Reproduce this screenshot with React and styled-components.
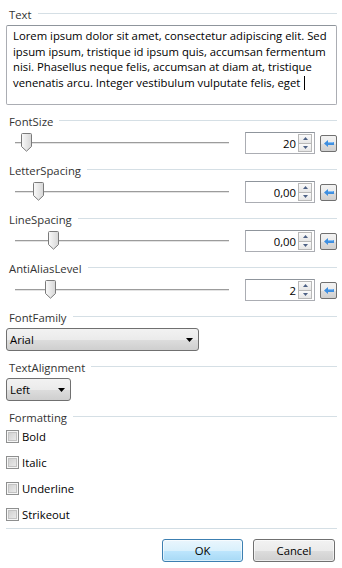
import styled, { createGlobalStyle } from "styled-components";

const GlobalStyle = createGlobalStyle`
  html, body {
    margin: 0;
    padding: 0;
    background: #ffffff;
  }
  body {
    font-family: "Open Sans", "Noto Sans", sans-serif;
    font-size: 11.3px;
    color: #1e1e1e;
  }
`;

const Window = styled.div`
  width: 342px;
  height: 568px;
  box-sizing: border-box;
  padding: 4px 5px 0 6px;
  display: flex;
  flex-direction: column;
`;

const Group = styled.section`
  display: flex;
  flex-direction: column;
  margin-bottom: 6px;
`;

const Header = styled.div`
  height: 20px;
  display: flex;
  align-items: center;
  gap: 6px;
  padding-left: 3px;
  margin-bottom: 1px;
  color: #333333;
  white-space: nowrap;
`;

const Rule = styled.div`
  flex: 1;
  height: 1px;
  background: #d5dfe5;
  border-bottom: 1px solid #ffffff;
`;

const TextBox = styled.div`
  height: 80px;
  box-sizing: border-box;
  border: 1px solid #abadb3;
  border-top-color: #8f959c;
  border-radius: 2px;
  padding: 2px 6px;
  line-height: 15.5px;
  color: #000000;
  white-space: pre;
  overflow: hidden;
`;

const Caret = styled.span`
  display: inline-block;
  width: 1px;
  height: 14px;
  background: #000;
  vertical-align: -3px;
  margin-left: 1px;
`;

const SliderRow = styled.div`
  height: 22px;
  display: flex;
  align-items: center;
  gap: 5px;
`;

const Slider = styled.div`
  flex: 1;
  height: 22px;
  position: relative;
`;

const Track = styled.div`
  position: absolute;
  left: 9px;
  right: 11px;
  top: 10px;
  height: 1px;
  background: #9c9c9c;
  border-bottom: 1px solid #e3e3e3;
`;

const Thumb = styled.svg`
  position: absolute;
  top: 1px;
  width: 11px;
  height: 19px;
`;

const NumberBox = styled.div`
  width: 70px;
  height: 22px;
  box-sizing: border-box;
  border: 1px solid #abadb3;
  border-top-color: #8f959c;
  display: flex;
  align-items: center;
  justify-content: flex-end;
  padding-right: 2px;
  gap: 2px;
  color: #000000;
`;

const Spin = styled.div`
  width: 14px;
  height: 18px;
  display: flex;
  flex-direction: column;
`;

const SpinButton = styled.div`
  flex: 1;
  box-sizing: border-box;
  border: 1px solid #b8b8b8;
  border-top-width: ${(p) => (p.$down ? "0" : "1px")};
  background: linear-gradient(#fbfbfb, #e6e6e6);
  display: flex;
  align-items: center;
  justify-content: center;
`;

const ResetButton = styled.div`
  width: 17px;
  height: 17px;
  box-sizing: border-box;
  border: 1px solid #707070;
  border-radius: 2px;
  background: linear-gradient(#f2f2f2 0%, #ebebeb 50%, #dddddd 51%, #cfcfcf 100%);
  display: flex;
  align-items: center;
  justify-content: center;
`;

const Combo = styled.div`
  width: ${(p) => p.$width}px;
  height: 23px;
  box-sizing: border-box;
  border: 1px solid #707070;
  border-radius: 3px;
  background: linear-gradient(#f2f2f2 0%, #ebebeb 50%, #dddddd 51%, #cfcfcf 100%);
  display: flex;
  align-items: center;
  justify-content: space-between;
  padding: 0 5px 0 3px;
  color: #000000;
`;

const CheckRow = styled.label`
  height: 16px;
  display: flex;
  align-items: center;
  gap: 3px;
  color: #000000;
  & + & {
    margin-top: 10px;
  }
`;

const CheckBox = styled.span`
  width: 13px;
  height: 13px;
  box-sizing: border-box;
  border: 1px solid #8e8f8f;
  box-shadow: inset 0 0 0 1px #f6f6f6, inset 0 0 0 2px #c3c3c3;
  background-image: linear-gradient(135deg, #cbcbcb, #f0f0f0);
`;

const Separator = styled.div`
  height: 1px;
  background: #d5dfe5;
`;

const ButtonBar = styled.div`
  margin-top: 10px;
  display: flex;
  justify-content: flex-end;
  gap: 10px;
  padding-right: 2px;
`;

const Button = styled.button`
  width: ${(p) => p.$width}px;
  height: 23px;
  box-sizing: border-box;
  border: 1px solid ${(p) => (p.$default ? "#3c7fb1" : "#707070")};
  border-radius: 3px;
  background: ${(p) =>
    p.$default
      ? "linear-gradient(#eaf6fd 0%, #d9f0fc 50%, #bee6fd 51%, #a7d9f5 100%)"
      : "linear-gradient(#f2f2f2 0%, #ebebeb 50%, #dddddd 51%, #cfcfcf 100%)"};
  box-shadow: inset 0 0 0 1px rgba(255, 255, 255, 0.6);
  font-family: inherit;
  font-size: inherit;
  color: #000000;
  padding: 0;
`;

const ThumbShape = ({ left }) => (
  <Thumb viewBox="0 0 11 19" style={{ left: left - 5.5 }}>
    <defs>
      <linearGradient id="thumbFill" x1="0" x2="1" y1="0" y2="0">
        <stop offset="0" stopColor="#fafafa" />
        <stop offset="1" stopColor="#d6d6d6" />
      </linearGradient>
    </defs>
    <path
      d="M1.5 0.5 H9.5 Q10.5 0.5 10.5 1.5 V13.5 L5.5 18.2 L0.5 13.5 V1.5 Q0.5 0.5 1.5 0.5 Z"
      fill="url(#thumbFill)"
      stroke="#7a7a7a"
    />
  </Thumb>
);

const Arrow = ({ down }) => (
  <svg width="5" height="3" viewBox="0 0 5 3">
    <path d={down ? "M0 0 H5 L2.5 3 Z" : "M0 3 H5 L2.5 0 Z"} fill="#4d6185" />
  </svg>
);

const ResetIcon = () => (
  <svg width="10" height="7" viewBox="0 0 10 7">
    <path d="M0 3.5 L4 0 V2 H10 V5 H4 V7 Z" fill="#3d8ee0" />
    <path d="M4 2.6 H9.4" stroke="#9fd0ff" strokeWidth="0.8" />
  </svg>
);

const DropArrow = () => (
  <svg width="7" height="4" viewBox="0 0 7 4">
    <path d="M0 0 H7 L3.5 4 Z" fill="#000000" />
  </svg>
);

const Section = ({ title, children }) => (
  <Group>
    <Header>
      <span>{title}</span>
      <Rule />
    </Header>
    {children}
  </Group>
);

const sliders = [
  { label: "FontSize", value: "20", pos: 20 },
  { label: "LetterSpacing", value: "0,00", pos: 32 },
  { label: "LineSpacing", value: "0,00", pos: 47 },
  { label: "AntiAliasLevel", value: "2", pos: 44 },
];

const formats = ["Bold", "Italic", "Underline", "Strikeout"];

const text =
  "Lorem ipsum dolor sit amet, consectetur adipiscing elit. Sed\n" +
  "ipsum ipsum, tristique id ipsum quis, accumsan fermentum\n" +
  "nisi. Phasellus neque felis, accumsan at diam at, tristique\n" +
  "venenatis arcu. Integer vestibulum vulputate felis, eget ";

const App = () => {
  return (
    <>
      <GlobalStyle />
      <Window>
        <Section title="Text">
          <TextBox>
            {text}
            <Caret />
          </TextBox>
        </Section>

        {sliders.map((s) => (
          <Section key={s.label} title={s.label}>
            <SliderRow>
              <Slider>
                <Track />
                <ThumbShape left={s.pos} />
              </Slider>
              <NumberBox>
                <span>{s.value}</span>
                <Spin>
                  <SpinButton>
                    <Arrow />
                  </SpinButton>
                  <SpinButton $down>
                    <Arrow down />
                  </SpinButton>
                </Spin>
              </NumberBox>
              <ResetButton>
                <ResetIcon />
              </ResetButton>
            </SliderRow>
          </Section>
        ))}

        <Section title="FontFamily">
          <Combo $width={193}>
            <span>Arial</span>
            <DropArrow />
          </Combo>
        </Section>

        <Section title="TextAlignment">
          <Combo $width={65}>
            <span>Left</span>
            <DropArrow />
          </Combo>
        </Section>

        <Section title="Formatting">
          {formats.map((f) => (
            <CheckRow key={f}>
              <CheckBox />
              <span>{f}</span>
            </CheckRow>
          ))}
        </Section>

        <Separator />
        <ButtonBar>
          <Button $default $width={81}>OK</Button>
          <Button $width={82}>Cancel</Button>
        </ButtonBar>
      </Window>
    </>
  );
};

export default App;
